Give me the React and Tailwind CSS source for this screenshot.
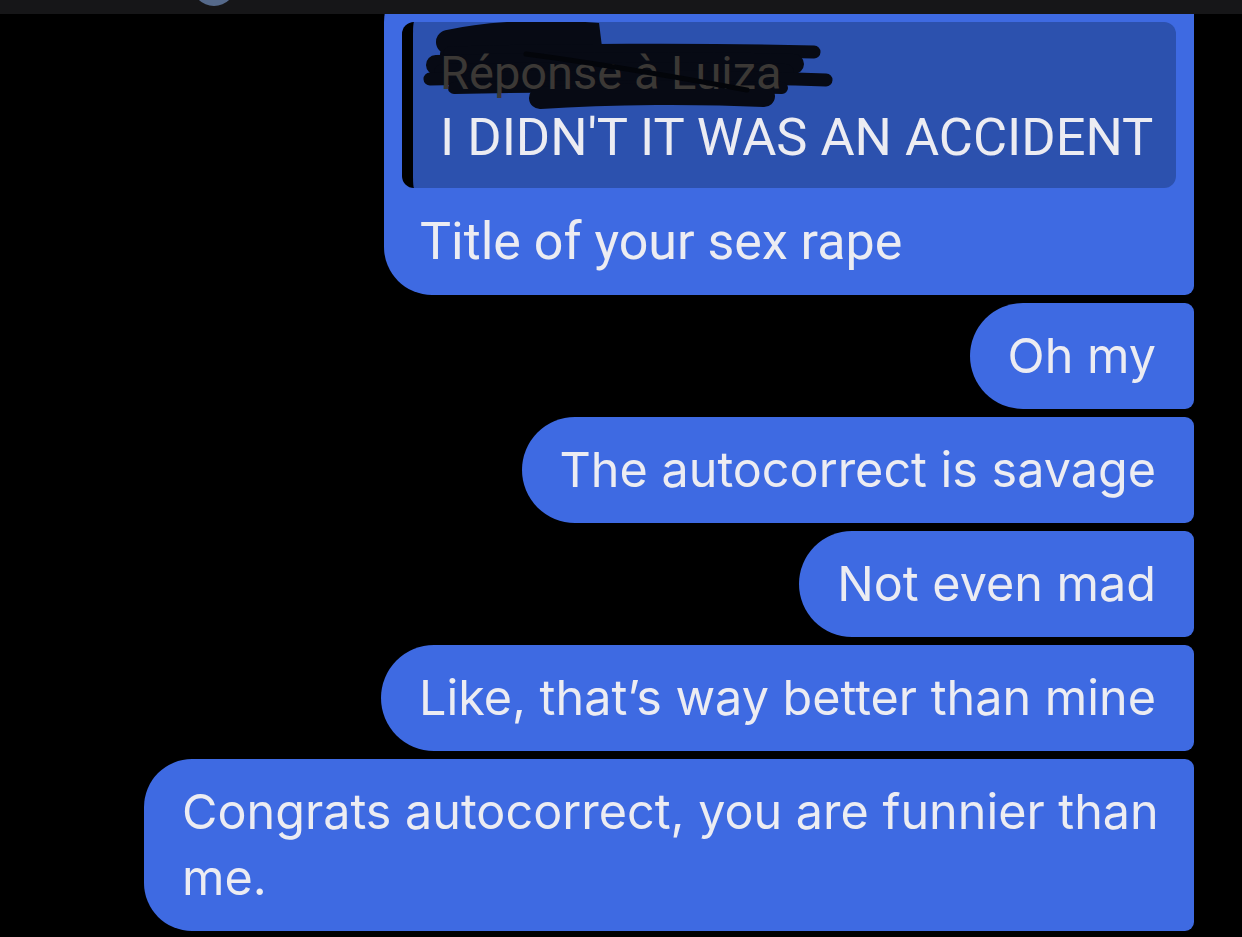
import React from "react";

const messages = [
  { text: "Oh my" },
  { text: "The autocorrect is savage" },
  { text: "Not even mad" },
  { text: "Like, that’s way better than mine" },
  { text: "Congrats autocorrect, you are funnier than me.", big: true },
];

// marker scribble drawn over the reply name
function Scribble() {
  return (
    <svg
      className="absolute -left-[11px] top-0 pointer-events-none"
      width="440"
      height="100"
      viewBox="0 0 440 100"
    >
      <g fill="none" stroke="#070a14" strokeLinecap="round">
        <path d="M46 20 C90 10 150 9 196 13 C170 22 130 28 50 32" strokeWidth="24" />
        <path d="M48 31 C150 28 300 27 412 30" strokeWidth="13" />
        <path d="M34 43 C150 40 300 39 392 42" strokeWidth="20" />
        <path d="M40 50 C150 48 300 48 384 50" strokeWidth="16" />
        <path d="M28 57 C150 54 320 54 424 58" strokeWidth="13" />
        <path d="M52 66 C140 64 280 64 380 66" strokeWidth="12" />
        <path d="M138 76 C210 71 300 71 362 74" strokeWidth="22" />
      </g>
    </svg>
  );
}

function ScribbleLine() {
  return (
    <svg
      className="absolute -left-[11px] top-0 pointer-events-none"
      width="440"
      height="100"
      viewBox="0 0 440 100"
    >
      <path
        d="M124 32 C200 42 280 56 345 68"
        fill="none"
        stroke="#03050a"
        strokeWidth="5"
        strokeLinecap="round"
      />
    </svg>
  );
}

function QuotedBubble() {
  return (
    <div className="relative -mt-[40px] bg-[#3e6ae2] rounded-l-[48px] rounded-br-[9px] pt-[48px] pb-[20px] px-[18px] w-[810px]">
      <div className="relative bg-[#2c51ae] rounded-[12px] border-l-[11px] border-black pl-[27px] pr-[20px] pt-[30px] pb-[20px]">
        <Scribble />
        <div className="relative font-['Roboto',sans-serif] text-[47px] leading-[42px] text-[#3b3835] whitespace-nowrap">
          Réponse à Luiza
        </div>
        <ScribbleLine />
        <div className="font-['Roboto',sans-serif] text-[52.4px] leading-[62px] mt-[12px] text-[#ececf2] whitespace-nowrap">
          I DIDN'T IT WAS AN ACCIDENT
        </div>
      </div>
      <div className="font-['Roboto',sans-serif] text-[52px] leading-[66px] pt-[21px] pl-[18px] text-[#ececf2]">
        Title of your sex rape
      </div>
    </div>
  );
}

export default function App() {
  return (
    <div className="w-[1242px] h-[937px] bg-black overflow-hidden">
      <div className="relative z-10 h-[14px] bg-[#161618]">
        <div className="absolute left-[192px] -top-[38px] w-[44px] h-[44px] rounded-full bg-[#55698a]" />
      </div>
      <div className="flex flex-col items-end gap-[8px] pr-[48px]">
        <QuotedBubble />
        {messages.map((m) => (
          <div
            key={m.text}
            className={
              m.big
                ? "bg-[#3e6ae2] rounded-l-[48px] rounded-r-[9px] pl-[38px] pr-[20px] py-[20px] w-[1050px]"
                : "bg-[#3e6ae2] rounded-l-[53px] rounded-r-[9px] px-[38px] py-[20px]"
            }
          >
            <div className="font-['Inter',sans-serif] text-[48.5px] leading-[66px] text-[#ececf2] whitespace-pre-wrap">
              {m.text}
            </div>
          </div>
        ))}
      </div>
    </div>
  );
}
